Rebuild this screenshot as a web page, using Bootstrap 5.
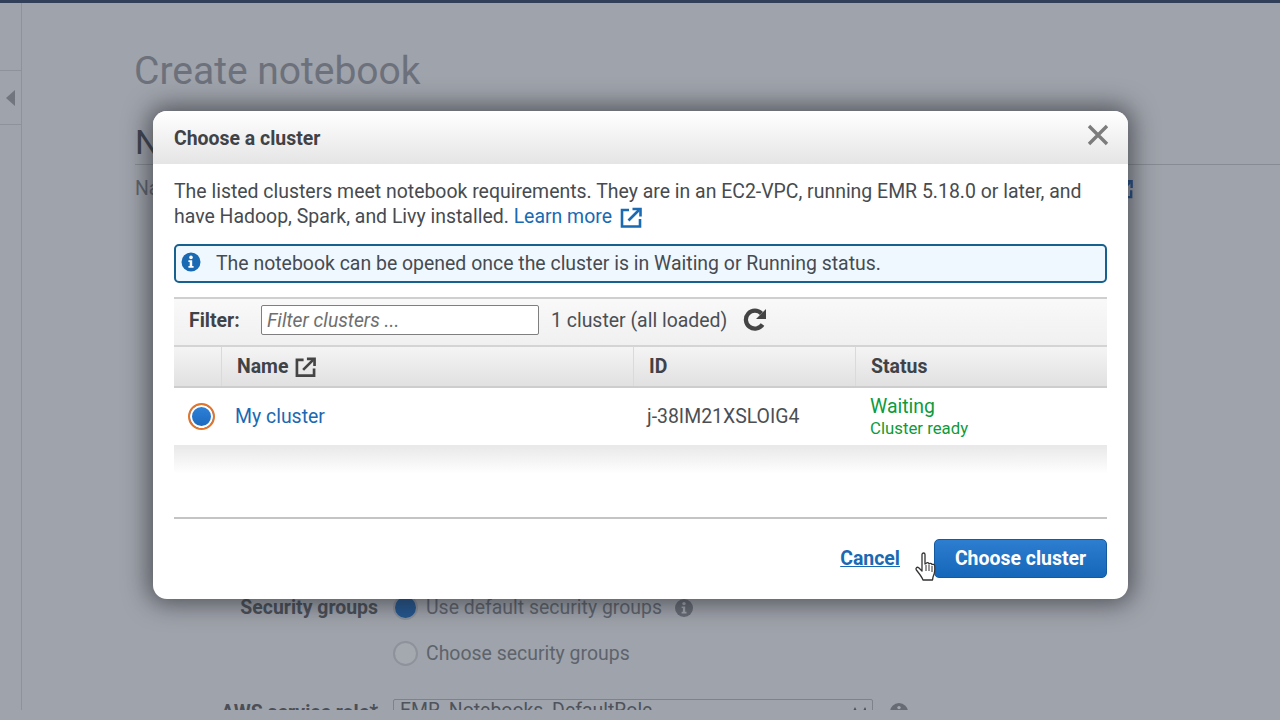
<!doctype html>
<html lang="en">
<head>
<meta charset="utf-8">
<title>Choose a cluster</title>
<link rel="stylesheet" href="https://cdn.jsdelivr.net/npm/bootstrap@5.3.0/dist/css/bootstrap.min.css">
<style>
html,body{height:720px;overflow:hidden}
body{font-family:Roboto,"Liberation Sans",sans-serif;background:#9fa3ab;color:#3b3f45}
.topstrip{height:3px;background:#323f5a}
.pagewrap{height:707px;overflow:hidden}
.rail{width:22px;flex:none;border-right:1px solid #8d929b}
.railtop{height:68px;border-bottom:1px solid #8d929b}
.railgap{height:54px;border-bottom:1px solid #8d929b;display:flex;align-items:center}
.arrow{width:0;height:0;border-top:8px solid transparent;border-bottom:8px solid transparent;border-right:9px solid #70757e;margin-left:6px}
.pagemain{padding-left:113px;padding-top:43px;min-width:0}
.pagetitle{font-size:39px;line-height:50px;color:#6c717b;font-weight:400;margin:0 0 0 -1px}
.sectitle{font-size:34px;line-height:44px;color:#3f4550;font-weight:400;margin:24px 0 0;border-bottom:1px solid #868b94}
.secnote{font-size:19.45px;color:#5f646d;margin:12px 0 0;line-height:24px;padding-right:147px;display:flex;justify-content:space-between;align-items:center}
.bgform{margin-top:394px}
.fieldlabel{width:258px;flex:none;font-size:19.45px;font-weight:700;color:#4a4f58;text-align:right;padding-right:15px;line-height:24px}
.rolelabel{padding-top:2px}
.bgradio{width:25px;height:25px;border-radius:50%;border:2px solid #8d929b;background:#a4a8af;flex:none}
.bgradio-on{background:#23578f}
.bgtext{font-size:19.45px;color:#5e636c;line-height:24px}
.bgselect{width:480px;height:40px;flex:none;border:1px solid #7d828b;border-radius:2px;font-size:19.45px;line-height:21px;color:#4e535c;padding:0 6px;display:flex;justify-content:space-between}
.selarrows{margin-top:7px}
.bginfo{color:#666b74}
.roleinfo{margin-top:3px}
.secondradio{margin-left:258px;margin-top:21px}
.rolerow{margin-top:33px}
.dlg{position:absolute;left:153px;top:111px;width:975px;height:488px;background:#fff;border-radius:14px;box-shadow:0 0 24px 5px rgba(30,32,38,.6);overflow:hidden;display:flex;flex-direction:column;font-size:19.45px}
.dlghead{height:53px;background:linear-gradient(#fff,#e5e5e5);padding:0 21px;display:flex;align-items:center;justify-content:space-between;flex:none}
.dlgtitle{font-size:19.45px;font-weight:700;color:#3f4347;margin:2px 0 0;line-height:52px}
.closex{margin-right:-2px;margin-top:-5px}
.dlgbody{padding:15px 21px 0;line-height:25px;color:#474b50}
.intro{margin:0}
.extico{vertical-align:-5px;margin-left:3px}
.lnk{color:#1a69b3;text-decoration:none}
.infobar{margin-top:15px;height:39px;border:2px solid #17618f;border-radius:5px;background:#eff8fe;display:flex;align-items:center;padding-left:5px;gap:11px}
.clusterbox{margin-top:14px;border-top:2px solid #cfcfcf}
.filterbar{height:46px;background:linear-gradient(#f9f9f9,#f0f0f0);padding-left:15px;padding-bottom:4px;display:flex;align-items:center}
.filterlab{font-weight:700;width:72px;color:#3f4347}
.filterinput{width:278px;height:30px;border:1px solid #7f7f7f;border-radius:2px;padding:0 5px;font-size:19.3px;font-style:italic;font-family:inherit;background:#fff;color:#444}
.filterinput::placeholder{color:#6f6f6f;opacity:1}
.countlab{margin-left:12px;margin-right:15px;color:#4b4f54}
.gridhead{display:flex;height:43px;background:linear-gradient(#f4f4f4,#e1e1e1);border-top:2px solid #d4d4d4;border-bottom:2px solid #cdcdcd;font-weight:700;color:#3f4347}
.gridhead>div{display:flex;align-items:center;border-left:1px solid #dadada;gap:7px}
.gridhead>div:first-child{border-left:0}
.colsel{width:47px;flex:none}
.colname{width:412px;flex:none;padding-left:15px}
.colid{width:222px;flex:none;padding-left:15px}
.colstat{flex:1;padding-left:15px}
.gridrow{display:flex;height:57px;align-items:center}
.gridrow .colname{padding-left:14px}
.gridrow .colid{padding-left:14px;color:#4b4f54}
.gridrow .colsel{display:flex;justify-content:center;padding-left:7px}
.radiosel{width:27px;height:27px;border-radius:50%;border:2px solid #e2752b;background:linear-gradient(#2f83db,#1a68bb);box-shadow:inset 0 0 0 2px #fff}
.stat1{color:#0f9a3c;line-height:23px}
.stat2{color:#0f9a3c;font-size:16.8px;line-height:21px}
.emptyarea{height:74px;background:linear-gradient(#e8e8e8,#fff 40%);border-bottom:2px solid #c4c4c4}
.dlgfoot{display:flex;justify-content:flex-end;align-items:center;padding-top:20px;position:relative}
.cancellnk{color:#1a69b3;font-weight:700;text-decoration:underline;margin-right:34px}
.btnchoose{width:173px;height:39px;border-radius:5px;border:1px solid #155a9f;background:linear-gradient(#2d7dd1,#1567b9);color:#fff;font-weight:700;font-size:19.45px;padding:0;display:flex;align-items:center;justify-content:center}
.handcur{position:absolute;left:740px;top:32px}
</style>
</head>
<body>
<div class="topstrip"></div>
<div class="pagewrap d-flex">
  <div class="rail">
    <div class="railtop"></div>
    <div class="railgap"><span class="arrow"></span></div>
  </div>
  <div class="pagemain flex-grow-1">
    <h1 class="pagetitle">Create notebook</h1>
    <h2 class="sectitle">Notebook name and location</h2>
    <div class="secnote"><span>Name</span>
      <svg width="20" height="20" viewBox="0 0 22 21" fill="none" stroke="#24508a" stroke-width="2.600"><path d="M9 3H2v16.500h18V12"/><path d="M8.500 13.500L19 3"/><path d="M12.500 2H20.500V9.500"/></svg>
    </div>
    <div class="bgform">
      <div class="d-flex align-items-center">
        <div class="fieldlabel">Security groups</div>
        <span class="bgradio bgradio-on me-2"></span>
        <span class="bgtext me-2">Use default security groups</span>
        <svg class="bginfo ms-1" width="20" height="20" viewBox="0 0 20 20"><circle cx="10" cy="10" r="9" fill="currentColor"/><circle cx="10" cy="5.600" r="1.700" fill="#a4a8af"/><path d="M7.600 8.400h3.600v5.400h1.300v1.700H7.600v-1.700h1.300V10H7.600z" fill="#a4a8af"/></svg>
      </div>
      <div class="d-flex align-items-center secondradio">
        <span class="bgradio me-2"></span>
        <span class="bgtext">Choose security groups</span>
      </div>
    </div>
    <div class="d-flex align-items-start rolerow">
      <div class="fieldlabel rolelabel">AWS service role*</div>
      <div class="bgselect"><span>EMR_Notebooks_DefaultRole</span>
        <svg class="selarrows" width="14" height="6" viewBox="0 0 14 6" fill="#4e535c"><path d="M3 0L6 6H0zM13 0L14 2V6H10z"/></svg>
      </div>
      <svg class="bginfo ms-3 roleinfo" width="20" height="20" viewBox="0 0 20 20"><circle cx="10" cy="10" r="9" fill="currentColor"/><circle cx="10" cy="5.600" r="1.700" fill="#a4a8af"/><path d="M7.600 8.400h3.600v5.400h1.300v1.700H7.600v-1.700h1.300V10H7.600z" fill="#a4a8af"/></svg>
    </div>
  </div>
</div>

<div class="dlg">
  <div class="dlghead">
    <h5 class="dlgtitle">Choose a cluster</h5>
    <svg class="closex" width="22" height="22" viewBox="0 0 22 22"><path d="M2 2L20 20M20 2L2 20" stroke="#7c7c7c" stroke-width="3.400" fill="none"/></svg>
  </div>
  <div class="dlgbody">
    <p class="intro">The listed clusters meet notebook requirements. They are in an EC2-VPC, running EMR 5.18.0 or later, and have Hadoop, Spark, and Livy installed. <a class="lnk" href="#">Learn more</a>
      <svg class="extico" width="22" height="21" viewBox="0 0 22 21" fill="none" stroke="#1a69b3" stroke-width="2.600"><path d="M9 3H2v16.500h18V12"/><path d="M8.500 13.500L19 3"/><path d="M12.500 2H20.500V9.500"/></svg></p>
    <div class="infobar">
      <svg class="mb-1" width="20" height="20" viewBox="0 0 20 20"><circle cx="10" cy="10" r="9.500" fill="#1a69b3"/><circle cx="10" cy="5.400" r="1.800" fill="#fff"/><path d="M7.400 8.300h3.800v5.700h1.400v1.700H7.400V14h1.300v-4H7.400z" fill="#fff"/></svg>
      <span class="ms-1">The notebook can be opened once the cluster is in Waiting or Running status.</span>
    </div>
    <div class="clusterbox">
      <div class="filterbar">
        <span class="filterlab">Filter:</span>
        <input class="filterinput" type="text" placeholder="Filter clusters ...">
        <span class="countlab">1 cluster (all loaded)</span>
        <svg width="26" height="26" viewBox="0 0 26 26" fill="none"><path d="M20.500 17.500A9 9 0 1 1 19.500 6.500" stroke="#444" stroke-width="4.200"/><path d="M24 2v10h-10z" fill="#444"/></svg>
      </div>
      <div class="gridhead">
        <div class="colsel"></div>
        <div class="colname">Name
          <svg width="21" height="20" viewBox="0 0 22 21" fill="none" stroke="#444" stroke-width="2.800"><path d="M9 3H2v16.500h18V12"/><path d="M8.500 13.500L19 3"/><path d="M12.500 2H20.500V9.500"/></svg>
        </div>
        <div class="colid">ID</div>
        <div class="colstat">Status</div>
      </div>
      <div class="gridrow">
        <div class="colsel"><span class="radiosel"></span></div>
        <div class="colname"><a class="lnk" href="#">My cluster</a></div>
        <div class="colid">j-38IM21XSLOIG4</div>
        <div class="colstat"><div class="stat1">Waiting</div><div class="stat2">Cluster ready</div></div>
      </div>
      <div class="emptyarea"></div>
    </div>
    <div class="dlgfoot">
      <a class="cancellnk" href="#">Cancel</a>
      <button class="btnchoose" type="button">Choose cluster</button>
      <svg class="handcur" width="24" height="32" viewBox="0 0 24 32"><path d="M8 3.500c0-2 3-2 3 0V13l1-.3c.4-1.500 2.800-1.300 3 .3.600-1 2.700-.8 3 .6.700-.6 2.600-.3 2.700 1.300.2 3 0 7-1 9.100-.8 1.800-1 3.500-1.200 5H9c-1-3-3.500-6-6.600-10-1.300-1.800.7-3.500 2.300-2.200L8 20z" fill="#fff" stroke="#333" stroke-width="1.300" stroke-linejoin="round"/><path d="M12 14v6M15 14v6M18 15v6" stroke="#333" stroke-width="1"/></svg>
    </div>
  </div>
</div>
<script src="https://cdn.jsdelivr.net/npm/bootstrap@5.3.0/dist/js/bootstrap.bundle.min.js"></script>
</body>
</html>
